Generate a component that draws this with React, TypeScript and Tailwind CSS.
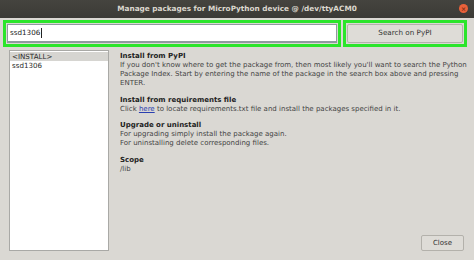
const App = () => {
  return (
    <div
      className="flex h-[260px] w-[474px] flex-col overflow-hidden bg-[#dad8d3] text-[#3c3c3c]"
      style={{ fontFamily: '"DejaVu Sans", sans-serif' }}
    >
      {/* title bar */}
      <div className="relative flex h-[18px] items-center justify-center bg-gradient-to-b from-[#45443f] to-[#3b3a36]">
        <span className="text-[7.3px] font-bold text-[#dcd8cf]">
          Manage packages for MicroPython device @ /dev/ttyACM0
        </span>
        <div className="absolute top-[4px] right-[6px] flex h-[9px] w-[9px] items-center justify-center rounded-full bg-[#e9613a]">
          <span className="text-[6px] leading-none font-bold text-[#7a2a14]">×</span>
        </div>
      </div>

      {/* search row */}
      <div className="mt-[2px] flex gap-[2px] pl-[3px]">
        <div className="flex h-[27px] w-[338px] border-[3px] border-[#2be52b] p-[1px]">
          <div className="flex flex-1 items-center border border-[#8f9a9f] border-b-[2px] bg-white pl-[2px] text-[7.2px] text-[#222]">
            ssd1306<span className="ml-[1px] h-[10px] w-px bg-[#222]" />
          </div>
        </div>
        <div className="flex h-[27px] w-[124px] border-[3px] border-[#2be52b] p-[1px]">
          <div className="flex flex-1 items-center justify-center rounded-[2px] border border-[#b3b1ab] bg-[#dedcd7] text-[7.2px] text-[#333]">
            Search on PyPI
          </div>
        </div>
      </div>

      {/* main area */}
      <div className="mt-[3px] flex flex-1 pb-[9px]">
        <div className="ml-[9px] flex w-[100px] shrink-0 flex-col border border-[#a9a9a6] bg-white pt-[1px] text-[7.1px] leading-[9px] text-[#2a2a2a]">
          <div className="bg-[#d6d5d1] px-[2px]">&lt;INSTALL&gt;</div>
          <div className="px-[2px]">ssd1306</div>
        </div>

        <div className="flex min-w-0 flex-1 flex-col pt-[2px] pr-[10px] pl-[11px] text-[7px] leading-[9px] whitespace-nowrap text-[#444]">
          <div className="font-bold text-[#222]">Install from PyPI</div>
          <div>If you don't know where to get the package from, then most likely you'll want to search the Python</div>
          <div>Package Index. Start by entering the name of the package in the search box above and pressing</div>
          <div>ENTER.</div>

          <div className="mt-[7.5px] font-bold text-[#222]">Install from requirements file</div>
          <div>
            Click <span className="text-[#2a3fb0] underline">here</span> to locate requirements.txt file and
            install the packages specified in it.
          </div>

          <div className="mt-[7.5px] font-bold text-[#222]">Upgrade or uninstall</div>
          <div>For upgrading simply install the package again.</div>
          <div>For uninstalling delete corresponding files.</div>

          <div className="mt-[7.5px] font-bold text-[#222]">Scope</div>
          <div>/lib</div>

          <div className="mt-auto flex justify-end">
            <button className="h-[16px] w-[43px] rounded-[2px] border border-[#b3b1ab] bg-[#dedcd7] text-[7px] text-[#333]">
              Close
            </button>
          </div>
        </div>
      </div>
    </div>
  )
}

export default App
